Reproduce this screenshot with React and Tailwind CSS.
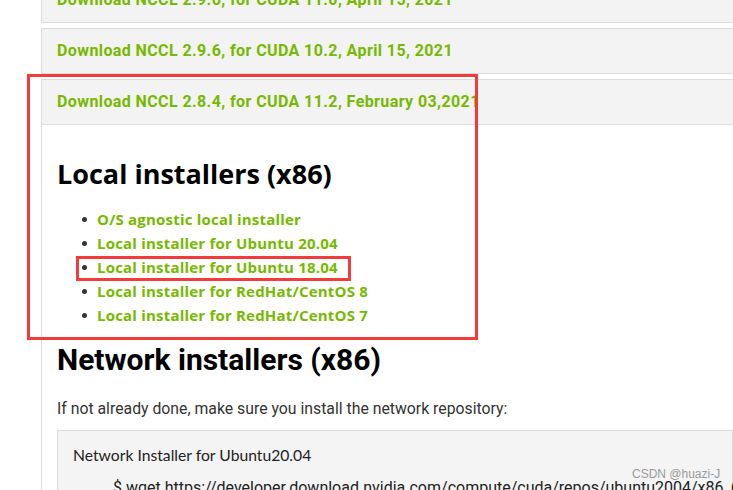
export default function App() {
  const green = 'text-[#76b900]'
  const rows = [
    'Download NCCL 2.9.6, for CUDA 11.0, April 15, 2021',
    'Download NCCL 2.9.6, for CUDA 10.2, April 15, 2021',
    'Download NCCL 2.8.4, for CUDA 11.2, February 03,2021',
  ]
  const local = [
    'O/S agnostic local installer',
    'Local installer for Ubuntu 20.04',
    'Local installer for Ubuntu 18.04',
    'Local installer for RedHat/CentOS 8',
    'Local installer for RedHat/CentOS 7',
  ]

  return (
    <div className="relative w-[733px] h-[490px] overflow-hidden bg-white font-['Roboto',sans-serif]">
      <div className="ml-[41px] w-[760px] -mt-[23px] flex flex-col gap-[5px]">
        {rows.map((r) => (
          <div key={r} className="h-[46px] flex items-center pl-[15px] bg-[#f3f3f3] border border-[#dcdcdc]">
            <span className={`${green} text-[16px] tracking-[0.4px] font-bold`}>{r}</span>
          </div>
        ))}
      </div>

      <div className="ml-[41px] border-l border-[#dcdcdc] pl-[15px] pt-[35px] h-[400px]">
        <h2 className="text-[27px] leading-[28px] font-bold text-black font-['Open_Sans',sans-serif]">Local installers (x86)</h2>
        <ul className="mt-[19px] font-['Open_Sans',sans-serif]">
          {local.map((t) => (
            <li key={t} className="flex items-center h-[24px]">
              <span className="ml-[25px] w-[5px] h-[5px] rounded-full bg-[#333]" />
              <span className={`ml-[10px] ${green} text-[15px] leading-[24px] font-bold tracking-[0.2px]`}>{t}</span>
            </li>
          ))}
        </ul>

        <h2 className="mt-[17px] text-[30px] leading-[32px] font-bold text-black">Network installers (x86)</h2>
        <p className="mt-[23px] text-[15.8px] leading-[20px] text-[#333]">If not already done, make sure you install the network repository:</p>

        <div className="mt-[11px] bg-[#f4f4f4] border border-[#dcdcdc] pl-[15px] pt-[14px] h-[120px]">
          <p className="text-[15.7px] leading-[20px] text-[#222] font-['Lato',sans-serif]">Network Installer for Ubuntu20.04</p>
          <p className="mt-[13px] pl-[40px] text-[16px] leading-[20px] text-[#222] whitespace-nowrap">$ wget https://developer.download.nvidia.com/compute/cuda/repos/ubuntu2004/x86_64/cuda-ubuntu2004.pin</p>
        </div>
      </div>

      <div className="absolute left-[27px] top-[74px] w-[451px] h-[266px] border-[3px] border-[#f23c3c]" />
      <div className="absolute left-[76px] top-[256px] w-[275px] h-[25px] border-[3px] border-[#f23c3c]" />

      <span className="absolute left-[632px] top-[466px] text-[12px] leading-[16px] text-[#9a9a9a] font-['Liberation_Sans',sans-serif]">CSDN @huazi-J</span>
    </div>
  )
}
